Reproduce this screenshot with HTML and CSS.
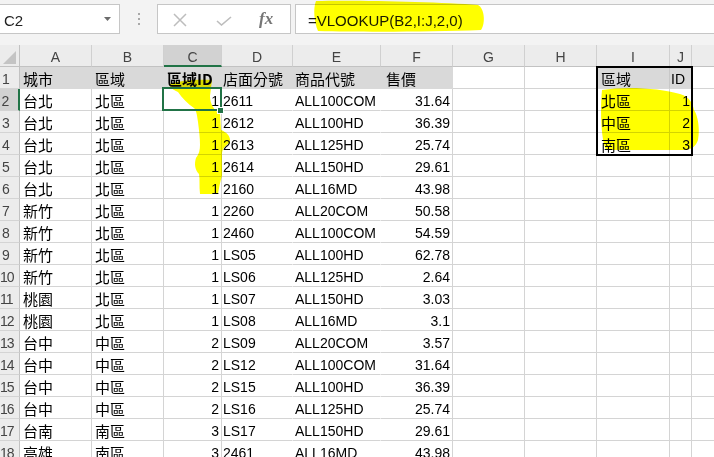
FILE: index.html
```html
<!DOCTYPE html>
<html lang="zh-Hant">
<head>
<meta charset="utf-8">
<title>VLOOKUP</title>
<link rel="stylesheet" href="styles.css">
</head>
<body>
<div class="app">
  <div class="topbar">
    <div class="namebox">
      <span class="ref">C2</span>
      <svg class="dd" width="7" height="4" viewBox="0 0 7 4"><polygon points="0,0 7,0 3.5,4" fill="#6b6b6b"/></svg>
    </div>
    <div class="grip"><i></i><i></i><i></i></div>
    <div class="fxbox">
      <svg class="icon-x" width="14" height="14" viewBox="0 0 14 14"><path d="M1 1 L13 13 M13 1 L1 13" stroke="#bdbdbd" stroke-width="1.5" fill="none"/></svg>
      <svg class="icon-ok" width="16" height="10" viewBox="0 0 16 10"><path d="M1 5 L5.5 9 L15 1" stroke="#bdbdbd" stroke-width="1.6" fill="none"/></svg>
      <span class="fx">fx</span>
    </div>
    <div class="formula">=VLOOKUP(B2,I:J,2,0)</div>
  </div>

  <div class="sheet">
    <div class="row">
      <div class="cell corner"><svg width="13" height="13" viewBox="0 0 13 13"><polygon points="13,0 13,13 0,13" fill="#c4c4c4"/></svg></div>
      <div class="cell ch">A</div>
      <div class="cell ch">B</div>
      <div class="cell ch sel">C</div>
      <div class="cell ch">D</div>
      <div class="cell ch">E</div>
      <div class="cell ch">F</div>
      <div class="cell ch">G</div>
      <div class="cell ch">H</div>
      <div class="cell ch">I</div>
      <div class="cell ch">J</div>
      <div class="cell ch last"></div>
    </div>

    <div class="row">
      <div class="cell rh">1</div>
      <div class="cell zh fill">城市</div>
      <div class="cell zh fill">區域</div>
      <div class="cell zh fill bold">區域ID</div>
      <div class="cell zh fill dcol">店面分號</div>
      <div class="cell zh fill ecol">商品代號</div>
      <div class="cell zh fill f1">售價</div>
      <div class="cell"></div>
      <div class="cell"></div>
      <div class="cell zh fill ipad keep">區域</div>
      <div class="cell fill jtxt">ID</div>
      <div class="cell last"></div>
    </div>

    <div class="row">
      <div class="cell rh sel">2</div>
      <div class="cell zh">台北</div>
      <div class="cell zh">北區</div>
      <div class="cell num">1</div>
      <div class="cell dcol">2611</div>
      <div class="cell ecol">ALL100COM</div>
      <div class="cell num">31.64</div>
      <div class="cell"></div>
      <div class="cell"></div>
      <div class="cell zh ipad">北區</div>
      <div class="cell num jnum">1</div>
      <div class="cell last"></div>
    </div>

    <div class="row">
      <div class="cell rh">3</div>
      <div class="cell zh">台北</div>
      <div class="cell zh">北區</div>
      <div class="cell num">1</div>
      <div class="cell dcol">2612</div>
      <div class="cell ecol">ALL100HD</div>
      <div class="cell num">36.39</div>
      <div class="cell"></div>
      <div class="cell"></div>
      <div class="cell zh ipad">中區</div>
      <div class="cell num jnum">2</div>
      <div class="cell last"></div>
    </div>

    <div class="row">
      <div class="cell rh">4</div>
      <div class="cell zh">台北</div>
      <div class="cell zh">北區</div>
      <div class="cell num">1</div>
      <div class="cell dcol">2613</div>
      <div class="cell ecol">ALL125HD</div>
      <div class="cell num">25.74</div>
      <div class="cell"></div>
      <div class="cell"></div>
      <div class="cell zh ipad">南區</div>
      <div class="cell num jnum">3</div>
      <div class="cell last"></div>
    </div>

    <div class="row">
      <div class="cell rh">5</div>
      <div class="cell zh">台北</div>
      <div class="cell zh">北區</div>
      <div class="cell num">1</div>
      <div class="cell dcol">2614</div>
      <div class="cell ecol">ALL150HD</div>
      <div class="cell num">29.61</div>
      <div class="cell"></div><div class="cell"></div><div class="cell"></div><div class="cell"></div><div class="cell last"></div>
    </div>

    <div class="row">
      <div class="cell rh">6</div>
      <div class="cell zh">台北</div>
      <div class="cell zh">北區</div>
      <div class="cell num">1</div>
      <div class="cell dcol">2160</div>
      <div class="cell ecol">ALL16MD</div>
      <div class="cell num">43.98</div>
      <div class="cell"></div><div class="cell"></div><div class="cell"></div><div class="cell"></div><div class="cell last"></div>
    </div>

    <div class="row">
      <div class="cell rh">7</div>
      <div class="cell zh">新竹</div>
      <div class="cell zh">北區</div>
      <div class="cell num">1</div>
      <div class="cell dcol">2260</div>
      <div class="cell ecol">ALL20COM</div>
      <div class="cell num">50.58</div>
      <div class="cell"></div><div class="cell"></div><div class="cell"></div><div class="cell"></div><div class="cell last"></div>
    </div>

    <div class="row">
      <div class="cell rh">8</div>
      <div class="cell zh">新竹</div>
      <div class="cell zh">北區</div>
      <div class="cell num">1</div>
      <div class="cell dcol">2460</div>
      <div class="cell ecol">ALL100COM</div>
      <div class="cell num">54.59</div>
      <div class="cell"></div><div class="cell"></div><div class="cell"></div><div class="cell"></div><div class="cell last"></div>
    </div>

    <div class="row">
      <div class="cell rh">9</div>
      <div class="cell zh">新竹</div>
      <div class="cell zh">北區</div>
      <div class="cell num">1</div>
      <div class="cell dcol">LS05</div>
      <div class="cell ecol">ALL100HD</div>
      <div class="cell num">62.78</div>
      <div class="cell"></div><div class="cell"></div><div class="cell"></div><div class="cell"></div><div class="cell last"></div>
    </div>

    <div class="row">
      <div class="cell rh">10</div>
      <div class="cell zh">新竹</div>
      <div class="cell zh">北區</div>
      <div class="cell num">1</div>
      <div class="cell dcol">LS06</div>
      <div class="cell ecol">ALL125HD</div>
      <div class="cell num">2.64</div>
      <div class="cell"></div><div class="cell"></div><div class="cell"></div><div class="cell"></div><div class="cell last"></div>
    </div>

    <div class="row">
      <div class="cell rh">11</div>
      <div class="cell zh">桃園</div>
      <div class="cell zh">北區</div>
      <div class="cell num">1</div>
      <div class="cell dcol">LS07</div>
      <div class="cell ecol">ALL150HD</div>
      <div class="cell num">3.03</div>
      <div class="cell"></div><div class="cell"></div><div class="cell"></div><div class="cell"></div><div class="cell last"></div>
    </div>

    <div class="row">
      <div class="cell rh">12</div>
      <div class="cell zh">桃園</div>
      <div class="cell zh">北區</div>
      <div class="cell num">1</div>
      <div class="cell dcol">LS08</div>
      <div class="cell ecol">ALL16MD</div>
      <div class="cell num">3.1</div>
      <div class="cell"></div><div class="cell"></div><div class="cell"></div><div class="cell"></div><div class="cell last"></div>
    </div>

    <div class="row">
      <div class="cell rh">13</div>
      <div class="cell zh">台中</div>
      <div class="cell zh">中區</div>
      <div class="cell num">2</div>
      <div class="cell dcol">LS09</div>
      <div class="cell ecol">ALL20COM</div>
      <div class="cell num">3.57</div>
      <div class="cell"></div><div class="cell"></div><div class="cell"></div><div class="cell"></div><div class="cell last"></div>
    </div>

    <div class="row">
      <div class="cell rh">14</div>
      <div class="cell zh">台中</div>
      <div class="cell zh">中區</div>
      <div class="cell num">2</div>
      <div class="cell dcol">LS12</div>
      <div class="cell ecol">ALL100COM</div>
      <div class="cell num">31.64</div>
      <div class="cell"></div><div class="cell"></div><div class="cell"></div><div class="cell"></div><div class="cell last"></div>
    </div>

    <div class="row">
      <div class="cell rh">15</div>
      <div class="cell zh">台中</div>
      <div class="cell zh">中區</div>
      <div class="cell num">2</div>
      <div class="cell dcol">LS15</div>
      <div class="cell ecol">ALL100HD</div>
      <div class="cell num">36.39</div>
      <div class="cell"></div><div class="cell"></div><div class="cell"></div><div class="cell"></div><div class="cell last"></div>
    </div>

    <div class="row">
      <div class="cell rh">16</div>
      <div class="cell zh">台中</div>
      <div class="cell zh">中區</div>
      <div class="cell num">2</div>
      <div class="cell dcol">LS16</div>
      <div class="cell ecol">ALL125HD</div>
      <div class="cell num">25.74</div>
      <div class="cell"></div><div class="cell"></div><div class="cell"></div><div class="cell"></div><div class="cell last"></div>
    </div>

    <div class="row">
      <div class="cell rh">17</div>
      <div class="cell zh">台南</div>
      <div class="cell zh">南區</div>
      <div class="cell num">3</div>
      <div class="cell dcol">LS17</div>
      <div class="cell ecol">ALL150HD</div>
      <div class="cell num">29.61</div>
      <div class="cell"></div><div class="cell"></div><div class="cell"></div><div class="cell"></div><div class="cell last"></div>
    </div>

    <div class="row">
      <div class="cell rh">18</div>
      <div class="cell zh">高雄</div>
      <div class="cell zh">南區</div>
      <div class="cell num">3</div>
      <div class="cell dcol">2461</div>
      <div class="cell ecol">ALL16MD</div>
      <div class="cell num">43.98</div>
      <div class="cell"></div><div class="cell"></div><div class="cell"></div><div class="cell"></div><div class="cell last"></div>
    </div>
  </div>

  <svg class="marks" width="714" height="457" viewBox="0 0 714 457">
    <path d="M316 1 C360 0 440 2 478 5 C484 8 486 22 481 30 C430 32 360 32 318 31 C314 22 313 8 316 1 Z"/>
    <path d="M169 84 C180 80 200 79 212 80 L210 96 C210 104 214 110 220 114 L221 130 C226 132 231 136 230 142 C226 146 222 148 222 154 L222 176 C220 182 219 188 218 194 L200 194 C199 186 200 180 199 174 C195 170 194 164 196 158 C199 154 200 150 200 145 C200 138 199 130 198 122 C197 114 196 110 194 108 C188 104 182 98 178 92 C174 90 170 88 169 84 Z"/>
    <path d="M602 90 C625 86 660 88 680 94 C690 97 693 104 694 110 C698 116 700 128 698 140 C696 146 692 149 686 150 L606 150 C601 140 600 110 602 90 Z"/>
  </svg>

  <div class="selection"><i class="handle"></i></div>
  <div class="lookup-box"></div>
</div>
</body>
</html>
```

FILE: styles.css
```css
html, body {
  margin: 0;
  padding: 0;
  background: #fff;
}

.app {
  position: relative;
  width: 714px;
  height: 457px;
  overflow: hidden;
  background: #fff;
  font-family: "Liberation Sans", "Noto Sans CJK TC", sans-serif;
  color: #000;
}

/* ---------- formula bar ---------- */
.topbar {
  height: 45px;
  box-sizing: border-box;
  padding-top: 4px;
  background: #f3f3f3;
  display: flex;
  align-items: flex-start;
}

.namebox {
  margin-left: -1px;
  width: 121px;
  height: 30px;
  box-sizing: border-box;
  border: 1px solid #c6c6c6;
  background: #fff;
  display: flex;
  justify-content: space-between;
  align-items: flex-start;
}

.ref {
  padding: 6px 0 0 4px;
  font-size: 15px;
  line-height: 20px;
  color: #222;
}

.dd {
  margin: 12px 8px 0 0;
}

.grip {
  width: 37px;
  padding-top: 9px;
  display: flex;
  flex-direction: column;
  align-items: center;
  gap: 3px;
}

.grip i {
  display: block;
  width: 2px;
  height: 2px;
  background: #a8a8a8;
}

.fxbox {
  width: 134px;
  height: 30px;
  box-sizing: border-box;
  border: 1px solid #c6c6c6;
  background: #fff;
  display: flex;
  align-items: flex-start;
}

.icon-x {
  margin: 8px 0 0 15px;
}

.icon-ok {
  margin: 11px 0 0 29px;
}

.fx {
  margin: 4px 0 0 27px;
  font-family: "Liberation Serif", serif;
  font-style: italic;
  font-weight: bold;
  font-size: 17px;
  line-height: 20px;
  color: #767676;
}

.formula {
  flex: 1;
  margin: 0 -2px 0 4px;
  height: 30px;
  box-sizing: border-box;
  border: 1px solid #c6c6c6;
  background: #fff;
  padding: 6px 0 0 12px;
  font-size: 15px;
  line-height: 20px;
  color: #1a1a1a;
  white-space: nowrap;
}

/* ---------- grid ---------- */
.row {
  display: grid;
  grid-template-columns: 20px 72px 72px 58px 71px 88px 72px 72px 72px 73px 22px 22px;
  height: 22px;
}

.cell {
  box-sizing: border-box;
  height: 22px;
  border-right: 1px solid #d4d4d4;
  border-bottom: 1px solid #d4d4d4;
  padding: 3px 3px 0;
  font-size: 14px;
  line-height: 18px;
  white-space: nowrap;
  overflow: hidden;
}

.corner {
  background: #ececec;
  border-right-color: #c2c2c2;
  border-bottom-color: #c2c2c2;
  padding: 0 3px 2px 0;
  display: flex;
  justify-content: flex-end;
  align-items: flex-end;
}

.ch {
  background: #ececec;
  color: #444;
  text-align: center;
  padding: 3px 0 0;
  border-right-color: #d0d0d0;
  border-bottom-color: #c2c2c2;
}

.ch.sel {
  background: #d2d2d2;
  border-bottom: 2px solid #217346;
}

.rh {
  background: #ececec;
  color: #444;
  text-align: center;
  padding: 3px 8px 0 0;
  letter-spacing: -1px;
  border-right-color: #c2c2c2;
  border-bottom-color: #d4d4d4;
  overflow: visible;
}

.rh.sel {
  background: #d2d2d2;
  border-right: 2px solid #217346;
}

.last {
  border-right: none;
}

.zh {
  font-family: "Noto Sans CJK TC", "Noto Sans CJK SC", sans-serif;
  font-size: 15px;
}

.bold {
  font-weight: bold;
}

.fill {
  background: #d9d9d9;
  border-right-color: #d9d9d9;
  border-bottom-color: #d9d9d9;
}

.fill.keep {
  border-right-color: #c8c8c8;
}

.num {
  text-align: right;
  padding-right: 2px;
}

.dcol {
  padding-left: 1px;
  border-right-color: transparent;
}

.ecol {
  padding-left: 2px;
  border-right-color: transparent;
}

.f1 {
  padding-left: 5px;
}

.ipad {
  padding-left: 4px;
}

.jnum {
  padding-right: 1px;
}

.jtxt {
  padding-left: 1px;
}

/* ---------- overlays ---------- */
.marks {
  position: absolute;
  left: 0;
  top: 0;
  mix-blend-mode: multiply;
  pointer-events: none;
}

.marks path {
  fill: #ffff00;
}

.selection {
  position: absolute;
  left: 162px;
  top: 87px;
  width: 60px;
  height: 24px;
  box-sizing: border-box;
  border: 2px solid #217346;
  pointer-events: none;
}

.handle {
  position: absolute;
  right: -4px;
  bottom: -5px;
  width: 5px;
  height: 5px;
  background: #217346;
  border: 1px solid #fff;
}

.lookup-box {
  position: absolute;
  left: 596px;
  top: 66px;
  width: 97px;
  height: 90px;
  box-sizing: border-box;
  border: 2px solid #000;
  pointer-events: none;
}
```
